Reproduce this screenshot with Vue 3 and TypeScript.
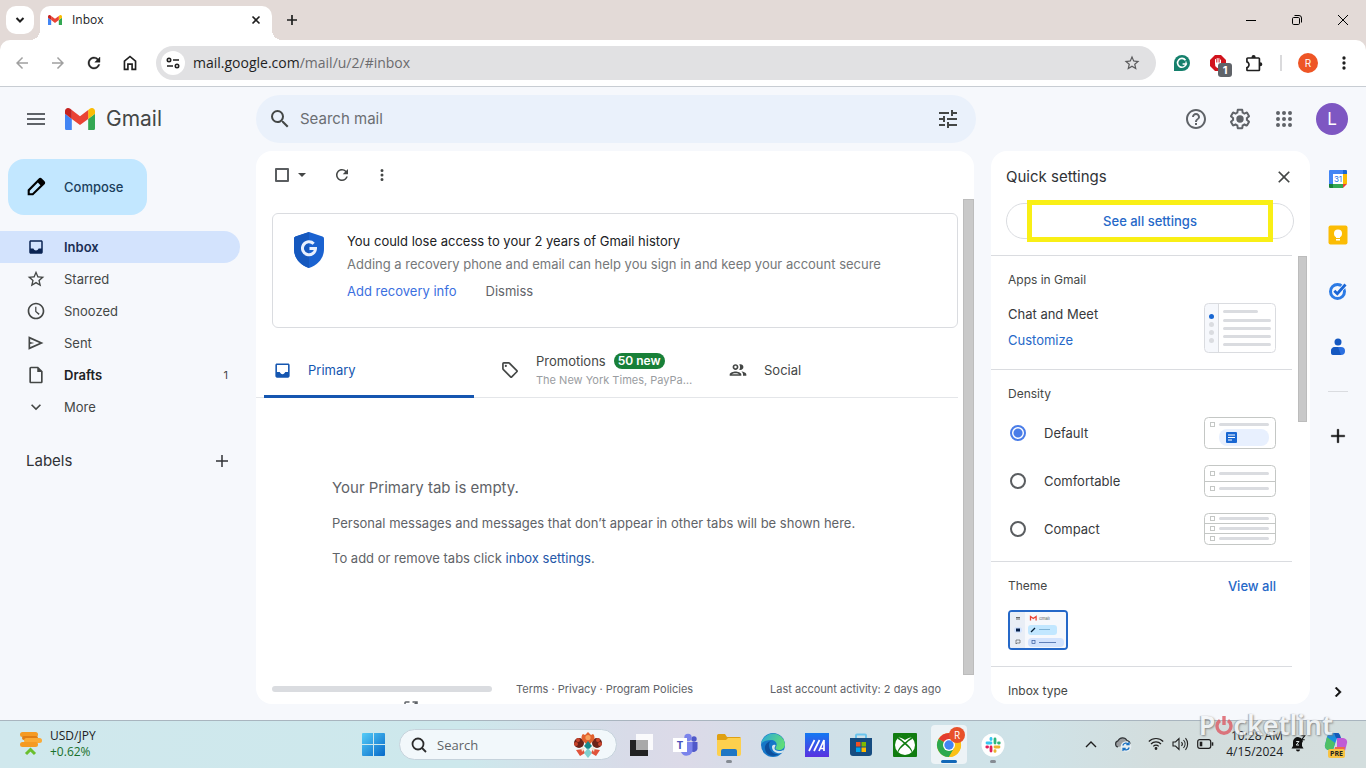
<script setup lang="ts">
import { h, ref } from 'vue'

const paths: Record<string, string> = {
  menu: 'M3 18h18v-2H3v2zm0-5h18v-2H3v2zm0-7v2h18V6H3z',
  search:
    'M15.5 14h-.79l-.28-.27A6.47 6.47 0 0 0 16 9.5 6.5 6.5 0 1 0 9.5 16c1.61 0 3.09-.59 4.23-1.57l.27.28v.79l5 4.99L20.49 19l-4.99-5zm-6 0C7.01 14 5 11.99 5 9.5S7.01 5 9.5 5 14 7.01 14 9.5 11.99 14 9.5 14z',
  tune: 'M3 17v2h6v-2H3zM3 5v2h10V5H3zm10 16v-2h8v-2h-8v-2h-2v6h2zM7 9v2H3v2h4v2h2V9H7zm14 4v-2H11v2h10zm-6-4h2V7h4V5h-4V3h-2v6z',
  help: 'M11 18h2v-2h-2v2zm1-16C6.48 2 2 6.48 2 12s4.48 10 10 10 10-4.48 10-10S17.52 2 12 2zm0 18c-4.41 0-8-3.59-8-8s3.59-8 8-8 8 3.59 8 8-3.59 8-8 8zm0-14c-2.21 0-4 1.79-4 4h2c0-1.1.9-2 2-2s2 .9 2 2c0 2-3 1.75-3 5h2c0-2.25 3-2.5 3-5 0-2.21-1.79-4-4-4z',
  settings:
    'M13.85 22.25h-3.7c-.74 0-1.36-.54-1.45-1.27l-.27-1.89c-.27-.14-.53-.29-.79-.46l-1.8.72c-.7.26-1.47-.03-1.81-.65L2.2 15.53c-.35-.66-.2-1.44.36-1.88l1.53-1.19c-.01-.15-.02-.3-.02-.46 0-.15.01-.31.02-.46l-1.52-1.19c-.59-.45-.74-1.26-.37-1.88l1.85-3.19c.34-.62 1.11-.9 1.79-.63l1.81.73c.26-.17.52-.32.78-.46l.27-1.91c.09-.7.71-1.25 1.44-1.25h3.7c.74 0 1.36.54 1.45 1.27l.27 1.89c.27.14.53.29.79.46l1.8-.72c.71-.26 1.48.03 1.82.65l1.84 3.18c.36.66.2 1.44-.36 1.88l-1.52 1.19c.01.15.02.3.02.46s-.01.31-.02.46l1.52 1.19c.56.45.72 1.23.37 1.86l-1.86 3.22c-.34.62-1.11.9-1.8.63l-1.8-.72c-.26.17-.52.32-.78.46l-.27 1.91c-.1.68-.72 1.22-1.46 1.22zm-3.23-2h2.76l.37-2.55.53-.22c.44-.18.88-.44 1.34-.78l.45-.34 2.38.96 1.38-2.4-2.03-1.58.07-.56c.03-.26.06-.51.06-.78s-.03-.53-.06-.78l-.07-.56 2.03-1.58-1.39-2.4-2.39.96-.45-.35c-.42-.32-.87-.58-1.33-.77l-.52-.22-.37-2.55h-2.76l-.37 2.55-.53.21c-.44.19-.88.44-1.34.79l-.45.33-2.38-.95-1.39 2.39 2.03 1.58-.07.56a7 7 0 0 0-.06.79c0 .26.02.53.06.78l.07.56-2.03 1.58 1.38 2.4 2.39-.96.45.35c.43.33.86.58 1.33.77l.53.22.38 2.55zM12 8.3a3.7 3.7 0 1 0 0 7.4 3.7 3.7 0 0 0 0-7.4z',
  apps: 'M6 8a2 2 0 1 0 0-4 2 2 0 0 0 0 4zm6 0a2 2 0 1 0 0-4 2 2 0 0 0 0 4zm6 0a2 2 0 1 0 0-4 2 2 0 0 0 0 4zM6 14a2 2 0 1 0 0-4 2 2 0 0 0 0 4zm6 0a2 2 0 1 0 0-4 2 2 0 0 0 0 4zm6 0a2 2 0 1 0 0-4 2 2 0 0 0 0 4zM6 20a2 2 0 1 0 0-4 2 2 0 0 0 0 4zm6 0a2 2 0 1 0 0-4 2 2 0 0 0 0 4zm6 0a2 2 0 1 0 0-4 2 2 0 0 0 0 4z',
  star: 'M22 9.24l-7.19-.62L12 2 9.19 8.63 2 9.24l5.46 4.73L5.82 21 12 17.27 18.18 21l-1.63-7.03L22 9.24zM12 15.4l-3.76 2.27 1-4.28-3.32-2.88 4.38-.38L12 6.1l1.71 4.04 4.38.38-3.32 2.88 1 4.28L12 15.4z',
  clock:
    'M11.99 2C6.47 2 2 6.48 2 12s4.47 10 9.99 10C17.52 22 22 17.52 22 12S17.52 2 11.99 2zM12 20c-4.42 0-8-3.58-8-8s3.58-8 8-8 8 3.58 8 8-3.58 8-8 8zm.5-13H11v6l4.2 3.7 1.2-1.3-3.9-3.2z',
  inbox:
    'M19 3H5c-1.1 0-2 .9-2 2v14c0 1.1.9 2 2 2h14c1.1 0 2-.9 2-2V5c0-1.1-.9-2-2-2zm0 11h-3.5c-.7 1.5-1.9 2.6-3.5 2.6S9.2 15.5 8.5 14H5V5h14v9z',
  sent: 'M3 4v16l18-8L3 4zm2 3.1L16 12 5 16.9v-3.6l5-1.3-5-1.3V7.1z',
  draft:
    'M14.5 2H6c-1.1 0-2 .9-2 2v16c0 1.1.9 2 2 2h12c1.1 0 2-.9 2-2V7.5L14.5 2zM6 20V4h7.5v4.5H18V20H6z',
  expand: 'M7.41 8.59L12 13.17l4.59-4.58L18 10l-6 6-6-6z',
  plus: 'M20 13h-7v7h-2v-7H4v-2h7V4h2v7h7v2z',
  refresh:
    'M17.65 6.35A7.958 7.958 0 0 0 12 4c-4.42 0-7.99 3.58-7.99 8s3.57 8 7.99 8c3.73 0 6.84-2.55 7.73-6h-2.08A5.99 5.99 0 0 1 12 18c-3.31 0-6-2.69-6-6s2.69-6 6-6c1.66 0 3.14.69 4.22 1.78L13 11h7V4l-2.35 2.35z',
  more: 'M12 8a2 2 0 1 0 0-4 2 2 0 0 0 0 4zm0 2a2 2 0 1 0 0 4 2 2 0 0 0 0-4zm0 6a2 2 0 1 0 0 4 2 2 0 0 0 0-4z',
  close:
    'M19 6.41 17.59 5 12 10.59 6.41 5 5 6.41 10.59 12 5 17.59 6.41 19 12 13.41 17.59 19 19 17.59 13.41 12z',
  people:
    'M9 13.75c-2.34 0-7 1.17-7 3.5V19h14v-1.75c0-2.33-4.66-3.5-7-3.5zM4.34 17c.84-.58 2.87-1.25 4.66-1.25s3.82.67 4.66 1.25H4.34zM9 12c1.93 0 3.5-1.57 3.5-3.5S10.93 5 9 5 5.5 6.57 5.5 8.5 7.07 12 9 12zm0-5c.83 0 1.5.67 1.5 1.5S9.83 10 9 10s-1.5-.67-1.5-1.5S8.17 7 9 7zm7.04 6.81c1.16.84 1.96 1.96 1.96 3.44V19h4v-1.75c0-2.02-3.5-3.17-5.96-3.44zM15 12c1.93 0 3.5-1.57 3.5-3.5S16.93 5 15 5c-.54 0-1.04.13-1.5.35.63.89 1 1.98 1 3.15s-.37 2.26-1 3.15c.46.22.96.35 1.5.35z',
  tag: 'M10.6 2.5H4.5a2 2 0 0 0-2 2v6.1c0 .5.2 1 .6 1.400l8.9 8.9a2 2 0 0 0 2.8 0l6.1-6.1a2 2 0 0 0 0-2.8L12 3.1a2 2 0 0 0-1.4-.6zM4.5 4.500h6l9 8.9-6.1 6.1-8.9-9v-6zM7 5.8a1.3 1.3 0 1 0 0 2.6 1.3 1.3 0 0 0 0-2.6z',
  pencil:
    'M20.4 3.2 19.2 2a3 3 0 0 0-4.2 0L2 15.4V22h6.6L22 9a3 3 0 0 0 0-4.2zM7.6 19.6H4.5v-3.1l9.7-9.8 3.1 3.1-9.7 9.8z',
  back: 'M20 11H7.83l5.59-5.59L12 4l-8 8 8 8 1.41-1.41L7.83 13H20v-2z',
  forward: 'M12 4l-1.41 1.41L16.17 11H4v2h12.17l-5.58 5.59L12 20l8-8z',
  home: 'M12 2 3.5 9v12.5h6.8v-7h3.4v7h6.8V9L12 2zm0 2.8L18.3 10v9.3h-2.4v-7H8.1v7H5.7V10L12 4.8z',
  puzzle:
    'M19.5 11V7c0-1.1-.9-2-2-2H14a2.5 2.5 0 0 0-5 0H4.5c-1.1 0-2 .9-2 2v4.3c1.5.3 2.5 1.3 2.5 2.7s-1 2.4-2.5 2.7V20c0 1.1.9 2 2 2h13c1.1 0 2-.9 2-2v-4a2.5 2.5 0 0 0 0-5zm-2 9h-13v-1.8c1.5-.8 2.5-2.4 2.5-4.2s-1-3.4-2.5-4.2V7h13v13z',
  chevron: 'M8.59 16.59 13.17 12 8.59 7.41 10 6l6 6-6 6z',
  openNew:
    'M5 5h5V3H5a2 2 0 0 0-2 2v14c0 1.1.9 2 2 2h14a2 2 0 0 0 2-2v-5h-2v5H5V5zm9-2v2h3.6l-9 9 1.4 1.4 9-9V10h2V3h-7z',
}

const Icon = (props: { name: string; size?: number }) =>
  h(
    'svg',
    { width: props.size ?? 20, height: props.size ?? 20, viewBox: '0 0 24 24', fill: 'currentColor', 'aria-hidden': 'true' },
    [h('path', { d: paths[props.name] })],
  )
Icon.props = ['name', 'size']

const GmailMark = (props: { width: number }) =>
  h('svg', { width: props.width, viewBox: '52 42 88 66', 'aria-hidden': 'true' }, [
    h('path', { fill: '#4285f4', d: 'M58 108h14V74L52 59v43c0 3.32 2.69 6 6 6' }),
    h('path', { fill: '#34a853', d: 'M120 108h14c3.32 0 6-2.69 6-6V59l-20 15' }),
    h('path', { fill: '#fbbc04', d: 'M120 48v26l20-15v-8c0-7.42-8.47-11.65-14.4-7.2' }),
    h('path', { fill: '#ea4335', d: 'M72 74V48l24 18 24-18v26L96 92' }),
    h('path', { fill: '#c5221f', d: 'M52 51v8l20 15V48l-5.6-4.2c-5.94-4.45-14.4-.22-14.4 7.2' }),
  ])
GmailMark.props = ['width']

interface Folder {
  icon: string
  label: string
  count?: number
  active?: boolean
}
const folders: Folder[] = [
  { icon: 'inbox', label: 'Inbox', active: true },
  { icon: 'star', label: 'Starred' },
  { icon: 'clock', label: 'Snoozed' },
  { icon: 'sent', label: 'Sent' },
  { icon: 'draft', label: 'Drafts', count: 1 },
  { icon: 'expand', label: 'More' },
]

const densities = ['Default', 'Comfortable', 'Compact']
const density = ref('Default')
const query = ref('')
const address = 'mail.google.com'
const addressPath = '/mail/u/2/#inbox'
</script>

<template>
  <div class="desktop">
    <header class="tabstrip">
      <button class="tab-search" aria-label="Search tabs">
        <svg width="12" height="12" viewBox="0 0 12 12"><path d="M2.5 4 6 7.500 9.5 4" fill="none" stroke="#1f1f1f" stroke-width="2" /></svg>
      </button>
      <div class="tab">
        <GmailMark :width="14" />
        <span class="tab-title">Inbox</span>
        <button class="plain" aria-label="Close tab">
          <svg width="10" height="10" viewBox="0 0 10 10"><path d="M1.5 1.5l7 7m0-7l-7 7" stroke="#1f1f1f" stroke-width="1.6" /></svg>
        </button>
      </div>
      <button class="plain new-tab" aria-label="New tab">
        <svg width="12" height="12" viewBox="0 0 12 12"><path d="M6 1v10M1 6h10" stroke="#1f1f1f" stroke-width="1.7" /></svg>
      </button>
      <div class="window-controls">
        <button class="plain" aria-label="Minimize"><svg width="10" height="10" viewBox="0 0 10 10"><path d="M0 5.500h10" stroke="#000" /></svg></button>
        <button class="plain" aria-label="Restore">
          <svg width="10" height="10" viewBox="0 0 10 10" fill="none" stroke="#000"><rect x=".5" y="2.5" width="7" height="7" rx="1.2" /><path d="M2.5.5H7A2.5 2.5 0 0 1 9.5 3v4.5" /></svg>
        </button>
        <button class="plain" aria-label="Close window"><svg width="10" height="10" viewBox="0 0 10 10"><path d="M0 0l10 10M10 0L0 10" stroke="#000" /></svg></button>
      </div>
    </header>

    <div class="toolbar-wrap">
      <div class="toolbar">
        <button class="tool dim" aria-label="Back"><Icon name="back" :size="18" /></button>
        <button class="tool dim" aria-label="Forward"><Icon name="forward" :size="18" /></button>
        <button class="tool" aria-label="Reload"><Icon name="refresh" :size="18" class="heavy" /></button>
        <button class="tool" aria-label="Home"><Icon name="home" :size="18" /></button>
        <div class="omnibox">
          <button class="site-info" aria-label="View site information">
            <svg width="14" height="12" viewBox="0 0 14 12" fill="none" stroke="#1f1f1f" stroke-width="1.6"><circle cx="3" cy="3" r="1.7" /><path d="M7 3h6M1 9h6" /><circle cx="11" cy="9" r="1.7" /></svg>
          </button>
          <a class="url" href="#inbox">{{ address }}<span>{{ addressPath }}</span></a>
          <button class="plain" aria-label="Bookmark this tab"><Icon name="star" :size="18" class="grey" /></button>
        </div>
        <button class="tool" aria-label="Grammarly">
          <svg width="16" height="16" viewBox="0 0 16 16"><path d="M8 0a8 8 0 1 1 0 16H0V8a8 8 0 0 1 8-8z" fill="#15806c" /><path d="M11.5 5.200A4.4 4.4 0 1 0 12.2 9H8.6" fill="none" stroke="#fff" stroke-width="1.6" /><path d="M12 6.500v3" stroke="#fff" stroke-width="1.2" /></svg>
        </button>
        <button class="tool" aria-label="Ad blocker">
          <svg width="16" height="16" viewBox="0 0 16 16"><path d="M5 0h6l5 5v6l-5 5H5l-5-5V5z" fill="#d1131c" /><path d="M5.5 8V4.500M7.200 8V3.500M8.900 8V3.500M10.500 8V5M5.500 8h5c0 3-.8 4.500-2.600 4.500S5.500 11 5.500 8z" fill="#fff" stroke="#fff" stroke-linecap="round" /></svg>
          <span class="badge">1</span>
        </button>
        <button class="tool" aria-label="Extensions"><Icon name="puzzle" :size="20" /></button>
        <span class="divider"></span>
        <button class="tool" aria-label="Profile"><span class="profile">R</span></button>
        <button class="tool" aria-label="Chrome menu"><Icon name="more" :size="20" /></button>
      </div>
    </div>

    <div class="gmail">
      <header class="gm-header">
        <div class="brand">
          <button class="plain menu" aria-label="Main menu"><Icon name="menu" :size="24" /></button>
          <GmailMark :width="30" />
          <span class="brand-name">Gmail</span>
        </div>
        <form class="search" @submit.prevent>
          <button class="plain" type="submit" aria-label="Search mail"><Icon name="search" :size="24" /></button>
          <input v-model="query" type="text" placeholder="Search mail" aria-label="Search mail" />
          <button class="plain" type="button" aria-label="Show search options"><Icon name="tune" :size="24" /></button>
        </form>
        <div class="gm-actions">
          <button class="plain" aria-label="Support"><Icon name="help" :size="24" /></button>
          <button class="plain" aria-label="Settings"><Icon name="settings" :size="24" /></button>
          <button class="plain" aria-label="Google apps"><Icon name="apps" :size="24" /></button>
          <button class="avatar" aria-label="Account">L</button>
        </div>
      </header>

      <div class="gm-body">
        <aside class="sidebar">
          <button class="compose"><Icon name="pencil" :size="20" /><span>Compose</span></button>
          <nav>
            <a v-for="f in folders" :key="f.label" href="#" :class="['folder', { active: f.active, bold: f.active || f.count }]">
              <Icon :name="f.icon" :size="f.icon === 'inbox' ? 18 : 20" />
              <span class="folder-name">{{ f.label }}</span>
              <span v-if="f.count" class="count">{{ f.count }}</span>
            </a>
          </nav>
          <div class="labels">
            <h2>Labels</h2>
            <button class="plain" aria-label="Create new label"><Icon name="plus" :size="18" /></button>
          </div>
        </aside>

        <main class="mail">
          <div class="mail-tools">
            <input type="checkbox" class="select-all" aria-label="Select all" />
            <button class="plain caret" aria-label="Select options"><svg width="8" height="4" viewBox="0 0 8 4"><path d="M0 0h8L4 4z" fill="#444746" /></svg></button>
            <button class="plain" aria-label="Refresh"><Icon name="refresh" :size="18" /></button>
            <button class="plain" aria-label="More"><Icon name="more" :size="18" /></button>
          </div>
          <div class="mail-scroll">
            <div class="mail-content">
              <section class="banner">
                <svg width="30" height="36" viewBox="0 0 30 36">
                  <path d="M15 0 1.500 4.500Q0 5 0 6.500V17c0 9 6 16 15 19 9-3 15-10 15-19V6.500Q30 5 28.500 4.500z" fill="#1a62d0" />
                  <path d="M15 0 1.500 4.500Q0 5 0 6.500V17c0 9 6 16 15 19z" fill="#1558be" />
                  <path d="M19.700 11.800A6.500 6.500 0 1 0 21.500 16.500H15.500" fill="none" stroke="#e8f0fe" stroke-width="3" />
                </svg>
                <div class="banner-text">
                  <h3>You could lose access to your 2 years of Gmail history</h3>
                  <p>Adding a recovery phone and email can help you sign in and keep your account secure</p>
                  <div class="banner-actions">
                    <a href="#">Add recovery info</a>
                    <button class="plain">Dismiss</button>
                  </div>
                </div>
              </section>

              <div class="tabs" role="tablist">
                <button class="mail-tab selected" role="tab" aria-selected="true"><Icon name="inbox" :size="19" /><span>Primary</span></button>
                <button class="mail-tab" role="tab" aria-selected="false">
                  <Icon name="tag" :size="20" />
                  <span class="promo">
                    <span class="promo-top">Promotions <b>50 new</b></span>
                    <small>The New York Times, PayPa…</small>
                  </span>
                </button>
                <button class="mail-tab" role="tab" aria-selected="false"><Icon name="people" :size="20" /><span>Social</span></button>
              </div>

              <section class="empty">
                <h3>Your Primary tab is empty.</h3>
                <p>Personal messages and messages that don’t appear in other tabs will be shown here.</p>
                <p>To add or remove tabs click <a href="#">inbox settings</a>.</p>
              </section>

              <footer class="mail-footer">
                <div class="quota"><span class="quota-bar"></span><Icon name="openNew" :size="18" /></div>
                <p><a href="#">Terms</a> · <a href="#">Privacy</a> · <a href="#">Program Policies</a></p>
                <p>Last account activity: 2 days ago</p>
              </footer>
            </div>
            <div class="scrollbar"></div>
          </div>
        </main>

        <aside class="settings">
          <div class="settings-top">
            <div class="settings-title">
              <h2>Quick settings</h2>
              <button class="plain" aria-label="Close"><Icon name="close" :size="20" /></button>
            </div>
            <div class="all-wrap">
              <button class="all-settings">See all settings</button>
              <span class="highlight"></span>
            </div>
          </div>
          <div class="settings-scroll">
            <div class="settings-content">
              <section class="apps">
                <h3>Apps in Gmail</h3>
                <div class="option">
                  <div class="chat"><span>Chat and Meet</span><a href="#">Customize</a></div>
                  <svg width="72" height="50" viewBox="0 0 72 50" fill="none">
                    <path d="M4.5.5H14v49H4.500a4 4 0 0 1-4-4v-41a4 4 0 0 1 4-4z" fill="#f6f8fc" />
                    <rect x=".5" y=".5" width="71" height="49" rx="4" stroke="#dadce0" /><path d="M14.5 0v50" stroke="#dadce0" />
                    <circle cx="7.5" cy="13.5" r="2.5" fill="#1967d2" />
                    <g fill="#dadce0"><circle cx="7.5" cy="21.5" r="2.5" /><circle cx="7.5" cy="29.5" r="2.5" /><circle cx="7.5" cy="37.5" r="2.5" /></g>
                    <path d="M20.5 8.500h32M20.5 17.500h45M20.5 25.500h45M20.5 33.500h45M20.5 41.500h45" stroke="#dadce0" stroke-width="3" stroke-linecap="round" />
                  </svg>
                </div>
              </section>
              <section class="density">
                <h3>Density</h3>
                <label v-for="d in densities" :key="d" class="option radio-row">
                  <input v-model="density" type="radio" name="density" :value="d" />
                  <span>{{ d }}</span>
                  <svg width="72" height="32" viewBox="0 0 72 32" fill="none" stroke="#c4c7c5">
                    <rect x=".5" y=".5" width="71" height="31" rx="4" />
                    <template v-if="d === 'Default'">
                      <rect x="6.5" y="5.5" width="4" height="4" /><path d="M16.5 7.500h47" stroke="#dadce0" stroke-width="3" stroke-linecap="round" />
                      <rect x="15" y="12" width="50" height="17" rx="8" fill="#e8f0fe" stroke="none" />
                      <rect x="22" y="15" width="11" height="11" rx="1" fill="#1967d2" stroke="none" /><path d="M24 18h7M24 20.500h7M24 23h4" stroke="#fff" stroke-width="1.2" />
                    </template>
                    <template v-else-if="d === 'Comfortable'">
                      <path d="M0 16.500h72" /><rect x="6.5" y="6.5" width="4" height="4" /><rect x="6.5" y="21.5" width="4" height="4" />
                      <path d="M16.5 8.500h47M16.5 23.500h47" stroke="#dadce0" stroke-width="3" stroke-linecap="round" />
                    </template>
                    <template v-else>
                      <path d="M0 10.500h72M0 20.500h72" /><rect x="6.5" y="3.5" width="4" height="4" /><rect x="6.5" y="13.5" width="4" height="4" /><rect x="6.5" y="23.5" width="4" height="4" />
                      <path d="M16.5 5.500h47M16.5 15.500h47M16.5 25.500h47" stroke="#dadce0" stroke-width="3" stroke-linecap="round" />
                    </template>
                  </svg>
                </label>
              </section>
              <section class="theme">
                <div class="theme-head"><h3>Theme</h3><a href="#">View all</a></div>
                <button class="theme-thumb" aria-label="Default theme">
                  <svg width="56" height="36" viewBox="0 0 56 36">
                    <rect width="56" height="36" fill="#f6f8fc" /><rect width="15" height="36" fill="#e9eef6" />
                    <path d="M6 5.500h4M6 7h4" stroke="#444" stroke-width=".8" />
                    <rect x="4" y="15" width="8" height="6" rx="3" fill="#d3e3fd" /><rect x="6" y="16.5" width="4" height="3" fill="#041e49" />
                    <path d="M6 28h4v3H7l-1 1z" fill="none" stroke="#444" stroke-width=".6" />
                    <path d="M20.5 8.500v-4l2.800 2 2.800-2v4" fill="none" stroke="#ea4335" stroke-width="1.3" />
                    <text x="29" y="8" font-size="4" fill="#555">Gmail</text>
                    <rect x="18" y="13" width="29" height="10" rx="3" fill="#c2e7ff" /><path d="M21 20l4-4" stroke="#001d35" stroke-width="1.3" /><path d="M29 17.500h11" stroke="#7fb2d5" />
                    <rect x="18" y="26" width="36" height="9" rx="4" fill="#d3e3fd" /><rect x="22" y="28.5" width="3" height="3" fill="none" stroke="#33579b" stroke-width=".7" /><path d="M29 30.500h17" stroke="#5f7fb8" />
                  </svg>
                </button>
              </section>
              <section class="inbox-type"><h3>Inbox type</h3></section>
            </div>
            <div class="scrollbar"></div>
          </div>
        </aside>

        <aside class="rail">
          <button class="plain" aria-label="Calendar">
            <svg width="20" height="20" viewBox="0 0 20 20">
              <path d="M2 1h13v4H5v10H1V2a1 1 0 0 1 1-1z" fill="#4285f4" /><path d="M15 1h3a1 1 0 0 1 1 1v3h-4z" fill="#1967d2" /><path d="M15 5h4v10h-4z" fill="#fbbc04" />
              <path d="M5 15h10v4H5z" fill="#34a853" /><path d="M1 15h4v4H2a1 1 0 0 1-1-1z" fill="#188038" /><path d="M15 15h4l-4 4z" fill="#ea4335" /><path d="M5 5h10v10H5z" fill="#fff" />
              <text x="10" y="13" text-anchor="middle" font-size="8" fill="#1a73e8">31</text>
            </svg>
          </button>
          <button class="plain" aria-label="Keep">
            <svg width="20" height="20" viewBox="0 0 20 20"><rect x=".5" y=".5" width="19" height="19" rx="2" fill="#fbbc04" /><circle cx="10" cy="8.5" r="4" fill="#fff" /><path d="M8 11h4v2H8zM8 14h4v1.500H8z" fill="#fff" /></svg>
          </button>
          <button class="plain" aria-label="Tasks">
            <svg width="20" height="20" viewBox="0 0 20 20" fill="none"><circle cx="9.5" cy="10.5" r="7" stroke="#2c7be5" stroke-width="3" /><path d="M12 9.500 18 3" stroke="#f6f8fc" stroke-width="4.5" /><path d="M6.3 9.800 9.300 12.800 17.500 3.500" stroke="#1a66d6" stroke-width="2.8" /></svg>
          </button>
          <button class="plain" aria-label="Contacts">
            <svg width="20" height="20" viewBox="0 0 20 20"><circle cx="10" cy="5" r="3.5" fill="#1558c0" /><rect x="3" y="10" width="14" height="8" rx="4" fill="#2a6fe0" /><path d="M3 16v-1.500A4.5 4.5 0 0 1 7.500 10H10l3 8H5a2 2 0 0 1-2-2z" fill="#1558c0" /></svg>
          </button>
          <span class="rail-divider"></span>
          <button class="plain dark" aria-label="Get add-ons"><Icon name="plus" :size="20" class="heavy" /></button>
          <button class="plain dark hide-panel" aria-label="Hide side panel"><Icon name="chevron" :size="20" class="heavy" /></button>
        </aside>
      </div>
    </div>

    <footer class="taskbar">
      <button class="widget">
        <svg width="24" height="26" viewBox="0 0 24 26">
          <g fill="#f59a23"><rect x="1" y="1" width="18" height="5" rx="2.5" /><rect x="3" y="5" width="16" height="4" rx="2" fill="#e07d14" /><rect x="5" y="7" width="18" height="5" rx="2.5" fill="#fbaa35" /><rect x="1" y="11" width="18" height="5" rx="2.5" /></g>
          <path d="M7 23l4.500-4.500L16 23" fill="none" stroke="#6abf2e" stroke-width="3" />
        </svg>
        <span class="widget-text"><span>USD/JPY</span><span class="up">+0.62%</span></span>
      </button>

      <div class="task-center">
        <button class="task" aria-label="Start">
          <svg width="23" height="23" viewBox="0 0 23 23">
            <defs><linearGradient id="win" x1="0" y1="0" x2="1" y2="1"><stop offset="0" stop-color="#55ccf7" /><stop offset="1" stop-color="#0669c9" /></linearGradient></defs>
            <path d="M1 0h10v11H0V1a1 1 0 0 1 1-1zM12 0h10a1 1 0 0 1 1 1v10H12zM0 12h11v11H1a1 1 0 0 1-1-1zM12 12h11v10a1 1 0 0 1-1 1H12z" fill="url(#win)" />
          </svg>
        </button>
        <label class="task-search">
          <svg width="16" height="16" viewBox="0 0 16 16" fill="none" stroke="#2b2b2b" stroke-width="1.8"><circle cx="7" cy="7" r="5.5" /><path d="M11 11l4 4" /></svg>
          <input type="text" placeholder="Search" aria-label="Search Windows" />
          <svg width="30" height="26" viewBox="0 0 30 26">
            <g fill="#6b2219"><circle cx="6" cy="11" r="5" /><circle cx="24" cy="11" r="5" /></g>
            <g fill="#c8442c"><circle cx="5" cy="8" r="2" /><circle cx="3" cy="12" r="2" /><circle cx="25" cy="8" r="2" /><circle cx="27" cy="12" r="2" /></g>
            <path d="M9 8c-1-2-.5-5 1-6l2 1 3-3 3 3 2-1c1.500 1 2 4 1 6l-4 4h-4z" fill="#e2622f" /><circle cx="15" cy="5.5" r="2.6" fill="#f6a05c" /><path d="M15 9l4 5-4 4-4-4z" fill="#16888a" />
            <path d="M3 18l7-1 2 4-5 3zM27 18l-7-1-2 4 5 3z" fill="#e0533a" /><path d="M15 16l4 5-4 5-4-5z" fill="#7fd0cf" /><path d="M8 15l4 1-3 4zM22 15l-4 1 3 4z" fill="#f1e3d0" />
          </svg>
        </label>
        <button class="task" aria-label="Task view">
          <svg width="24" height="24" viewBox="0 0 24 24"><path d="M1 7h18v16H1z" fill="#222" /><path d="M7 1h17v16H7z" fill="#fff" fill-opacity=".85" /><path d="M7 7h12v10H7z" fill="#a9a9a9" /></svg>
        </button>
        <button class="task" aria-label="Teams">
          <svg width="26" height="24" viewBox="0 0 26 24">
            <circle cx="22" cy="6" r="2.7" fill="#5059c9" /><circle cx="16" cy="4.5" r="3.7" fill="#7b83eb" /><path d="M19 9h6.500v7a4 4 0 0 1-6.500 2z" fill="#5059c9" /><path d="M9 9h11.500v8a6 6 0 0 1-11.500 2z" fill="#7b83eb" />
            <rect x="1" y="5" width="14" height="14" fill="#fff" /><text x="8" y="16" text-anchor="middle" font-size="11" font-weight="700" fill="#4b53bc">T</text>
          </svg>
        </button>
        <button class="task open" aria-label="File Explorer">
          <svg width="26" height="24" viewBox="0 0 26 24"><path d="M1 2.500A1.5 1.5 0 0 1 2.500 1H9l2 3h12.500A1.5 1.5 0 0 1 25 5.500V12H1z" fill="#e0a012" /><path d="M1 7h9l2-2h13v16a2 2 0 0 1-2 2H3a2 2 0 0 1-2-2z" fill="#fdd04e" /><path d="M5 23v-5a2 2 0 0 1 2-2h12a2 2 0 0 1 2 2v5z" fill="#1f76c4" /></svg>
        </button>
        <button class="task" aria-label="Edge">
          <svg width="24" height="24" viewBox="0 0 24 24">
            <defs><linearGradient id="edge" x1="0" y1="0" x2="1" y2=".4"><stop offset="0" stop-color="#2aa5e0" /><stop offset="1" stop-color="#5fdc7a" /></linearGradient></defs>
            <circle cx="12" cy="12" r="12" fill="#1677c8" /><path d="M.2 11A12 12 0 0 1 24 11c0 4-3 6-6 6-3.500 0-4-1.500-3-3 2-4-1-7-5-7C5 7 1 9 .2 11z" fill="url(#edge)" />
            <path d="M8 12c0 6 5 10 10 9-5 3.500-13 2-14-5-.6-4 2-7 6-8-1.400 1-2 2.400-2 4z" fill="#0d4f9c" /><path d="M14.5 12c0 1.500-1 2-1 3.300 0 1.700 2 2.700 4.500 2.700 2 0 3.500-.6 5-1.600l-1 3.200c-5 2-11-.6-11-5.600 0-1.500 1-3 3.500-2z" fill="#d6e6ec" />
          </svg>
        </button>
        <button class="task" aria-label="MyASUS">
          <svg width="24" height="24" viewBox="0 0 24 24"><defs><linearGradient id="asus" x1="0" y1="0" x2="0" y2="1"><stop offset="0" stop-color="#1479f2" /><stop offset="1" stop-color="#5931e0" /></linearGradient></defs><rect width="24" height="24" fill="url(#asus)" /><path d="M4 18 9.500 7M9 18 14.500 7M14 18 19 7v11M15.500 15.500H19" fill="none" stroke="#fff" stroke-width="1.7" /></svg>
        </button>
        <button class="task" aria-label="Microsoft Store">
          <svg width="24" height="24" viewBox="0 0 24 24"><path d="M7 6V2.500A1 1 0 0 1 8 1.500h8a1 1 0 0 1 1 1V6" fill="none" stroke="#6cc5ee" stroke-width="2" /><path d="M1 5h22v15a3 3 0 0 1-3 3H4a3 3 0 0 1-3-3z" fill="#164c80" /><path d="M7 9h4.500v4.500H7z" fill="#f25022" /><path d="M12.500 9H17v4.500h-4.500z" fill="#7fba00" /><path d="M7 14.500h4.500V19H7z" fill="#00a4ef" /><path d="M12.500 14.500H17V19h-4.500z" fill="#ffb900" /></svg>
        </button>
        <button class="task" aria-label="Xbox">
          <svg width="24" height="24" viewBox="0 0 24 24"><rect width="24" height="24" rx="1" fill="#107c10" /><circle cx="12" cy="12" r="10" fill="#fff" /><path d="M5 4.500C8 4.200 10.500 6 12 7c1.500-1 4-2.800 7-2.500C16 2 14 1.500 12 1.500S8 2 5 4.500z" fill="#107c10" /><path d="M12 9.200c5 4 8.200 8.300 7.200 11.300-.7-3.200-3.600-6.200-7.200-9-3.600 2.800-6.500 5.800-7.200 9-1-3 2.200-7.300 7.200-11.300z" fill="#107c10" /><path d="M12 10.500C9.500 8 7 6 4.800 5M12 10.500C14.500 8 17 6 19.200 5" fill="none" stroke="#107c10" stroke-width="1.6" /></svg>
        </button>
        <button class="task current" aria-label="Chrome">
          <svg width="26" height="26" viewBox="0 0 26 26">
            <circle cx="13" cy="13" r="12" fill="#fbc116" /><path d="M13 13 2.600 7A12 12 0 0 1 23.400 7z" fill="#e33b2e" /><path d="M13 13 2.600 7A12 12 0 0 0 13 25l5.200-9z" fill="#2da94f" /><path d="M13 7h10.400A12 12 0 0 1 13 25l5.200-9z" fill="#fbc116" />
            <circle cx="13" cy="13" r="6" fill="#fff" /><circle cx="13" cy="13" r="4.7" fill="#4285f4" />
          </svg>
          <span class="chrome-badge">R</span>
        </button>
        <button class="task open" aria-label="Slack">
          <svg width="24" height="24" viewBox="0 0 24 24"><circle cx="12" cy="12" r="11.5" fill="#fff" /><g stroke-width="2.8" stroke-linecap="round"><path d="M6 10h4" stroke="#36c5f0" /><path d="M10 5.500v1" stroke="#36c5f0" /><path d="M14 6v4" stroke="#2eb67d" /><path d="M17.500 10h.8" stroke="#2eb67d" /><path d="M14 14h4" stroke="#ecb22e" /><path d="M14 17.600v.8" stroke="#ecb22e" /><path d="M10 14v4" stroke="#e01e5a" /><path d="M5.800 14h.8" stroke="#e01e5a" /></g></svg>
        </button>
      </div>

      <div class="tray">
        <button class="plain" aria-label="Show hidden icons"><svg width="12" height="8" viewBox="0 0 12 8"><path d="M1 7l5-5 5 5" fill="none" stroke="#1f1f1f" stroke-width="1.4" /></svg></button>
        <button class="plain" aria-label="OneDrive">
          <svg width="18" height="16" viewBox="0 0 18 16"><path d="M4 11a3.200 3.200 0 0 1 0-6.200A5 5 0 0 1 13 4.500a3.500 3.500 0 0 1 3 4" fill="#9a9da0" stroke="#33373a" stroke-width="1.2" /><circle cx="12" cy="10.500" r="5.300" fill="#e6eef2" /><path d="M8.800 9.500a3.400 3.400 0 0 1 6-1M15.200 11.500a3.400 3.400 0 0 1-6 1M15 6v2.700h-2.700M9 15v-2.700h2.700" fill="none" stroke="#176fc1" stroke-width="1.300" /></svg>
        </button>
        <button class="plain network" aria-label="Network, volume and battery">
          <svg width="16" height="13" viewBox="0 0 16 13" fill="none" stroke="#1f1f1f" stroke-width="1.2"><path d="M.8 4.500a10.200 10.200 0 0 1 14.400 0M3 7a7 7 0 0 1 10 0M5.300 9.300a3.800 3.800 0 0 1 5.400 0" /><circle cx="8" cy="11.500" r=".8" fill="#1f1f1f" /></svg>
          <svg width="17" height="14" viewBox="0 0 17 14" fill="none" stroke="#1f1f1f" stroke-width="1.1"><path d="M1 5h2.500L7 1.500v11L3.500 9H1zM9.500 5a3 3 0 0 1 0 4M11.500 3a6 6 0 0 1 0 8M13.500 1.200a9 9 0 0 1 0 11.600" /></svg>
          <svg width="17" height="10" viewBox="0 0 17 10" fill="none" stroke="#1f1f1f" stroke-width="1.2"><rect x=".7" y=".7" width="13" height="8.600" rx="2" /><path d="M15.500 3.300v3.400" stroke-width="1.6" /><path d="M2.700 2.700h2.600v4.600H2.700z" fill="#1f1f1f" stroke="none" /></svg>
        </button>
        <button class="clock"><span>10:28 AM</span><span>4/15/2024</span></button>
        <button class="plain" aria-label="Notifications">
          <svg width="15" height="17" viewBox="0 0 15 17"><path d="M7 2a5 5 0 0 0-5 5v4L.5 13.500h12L11 11V8l1-2-2-3z" fill="#111" /><path d="M5 14.500a2 2 0 0 0 4 0z" fill="#111" /><path d="M10.500.8h3.200l-3.200 4h3.200" fill="none" stroke="#111" stroke-width="1.1" /><path d="M5.200 6.500H8L5.200 10H8" fill="none" stroke="#dfe8e9" /></svg>
        </button>
        <button class="plain copilot" aria-label="Copilot">
          <svg width="24" height="24" viewBox="0 0 24 24">
            <path d="M7 1h8l-3 8-3 9H5a4 4 0 0 1-4-5l2-8a5 5 0 0 1 4-4z" fill="#1c8ee0" /><path d="M3 5l-2 8a4 4 0 0 0 4 5h4l2-7z" fill="#4fbf66" /><path d="M13 1a3 3 0 0 1 3 2l1 3h-5L10 1z" fill="#1557b8" />
            <path d="M13 6h6a4 4 0 0 1 4 5l-2 8a5 5 0 0 1-5 4H9l4-8z" fill="#c05bd6" /><path d="M11 15h10l-1 4a5 5 0 0 1-4 4H9z" fill="#f0684a" />
          </svg>
          <span class="pre">PRE</span>
        </button>
      </div>
      <div class="watermark" aria-hidden="true">
        <span>P</span>
        <svg width="18" height="20" viewBox="0 0 18 20" fill="none" stroke="#dc5a64" stroke-width="3.4"><path d="M5 5.500a7 7 0 1 0 8 0M9 1v9" /></svg>
        <span>cketlint</span>
      </div>
    </footer>
  </div>
</template>

<style>
body {
  background: #f6f8fc;
}
</style>

<style scoped>
.desktop {
  display: flex;
  flex-direction: column;
  height: 100vh;
  min-width: 1200px;
  overflow: hidden;
  font-family: Inter, Roboto, sans-serif;
  font-size: 13px;
  line-height: 20px;
  color: #202124;
}
.desktop *,
.desktop *::before,
.desktop *::after {
  box-sizing: border-box;
}
button,
input {
  font: inherit;
  color: inherit;
}
button {
  display: flex;
  align-items: center;
  justify-content: center;
  padding: 0;
  border: 0;
  cursor: pointer;
}
.plain {
  background: none;
}
svg {
  display: block;
  flex: none;
}
a {
  text-decoration: none;
  color: inherit;
}
h2,
h3,
p {
  margin: 0;
  font-size: inherit;
  font-weight: 400;
}
input[type='text'] {
  flex: 1;
  min-width: 0;
  padding: 0;
  border: 0;
  outline: 0;
  background: none;
}

/* Browser frame */
.tabstrip {
  display: flex;
  align-items: flex-end;
  height: 40px;
  flex: none;
  padding-left: 6px;
  background: #e3dad7;
  font-family: "Open Sans", "Noto Sans", sans-serif;
}
.tab-search {
  width: 28px;
  height: 28px;
  margin-bottom: 6px;
  border-radius: 10px;
  background: #fff;
}
.tab {
  position: relative;
  display: flex;
  align-items: center;
  width: 232px;
  height: 34px;
  margin-left: 6px;
  padding: 0 8px 6px;
  border-radius: 10px 10px 0 0;
  background: #fff;
  font-size: 12px;
}
.tab::before,
.tab::after {
  content: '';
  position: absolute;
  bottom: 0;
  width: 10px;
  height: 10px;
}
.tab::before {
  left: -10px;
  background: radial-gradient(circle at 0 0, transparent 10px, #fff 10px);
}
.tab::after {
  right: -10px;
  background: radial-gradient(circle at 100% 0, transparent 10px, #fff 10px);
}
.tab-title {
  flex: 1;
  margin-left: 10px;
}
.tab .plain {
  width: 16px;
  height: 28px;
}
.new-tab {
  width: 40px;
  height: 40px;
}
.window-controls {
  display: flex;
  margin-left: auto;
}
.window-controls button {
  width: 46px;
  height: 40px;
}
.toolbar-wrap {
  flex: none;
  background: #e3dad7;
}
.toolbar {
  display: flex;
  align-items: center;
  height: 47px;
  padding: 0 4px;
  border-bottom: 1px solid #c8cdd3;
  border-radius: 10px 10px 0 0;
  background: #fff;
}
.tool {
  position: relative;
  width: 36px;
  height: 36px;
  background: none;
  color: #1f1f1f;
}
.dim {
  color: #a0a0a0;
}
.heavy {
  stroke: currentColor;
  stroke-width: 0.5;
}
.omnibox {
  display: flex;
  align-items: center;
  flex: 1;
  height: 34px;
  margin: 0 8px;
  padding: 0 15px 0 5px;
  border-radius: 17px;
  background: #e1e1e3;
  font-family: "Open Sans", "Noto Sans", sans-serif;
  font-size: 14px;
}
.site-info {
  width: 24px;
  height: 24px;
  border-radius: 12px;
  background: #fff;
}
.url {
  flex: 1;
  margin-left: 8px;
  color: #1f1f1f;
}
.url span {
  color: #6b6b6e;
}
.grey {
  color: #5a5a5c;
}
.badge {
  position: absolute;
  left: 18px;
  top: 18px;
  width: 14px;
  height: 14px;
  border-radius: 3px;
  background: #5f6368;
  color: #fff;
  font-size: 11px;
  font-weight: 700;
  line-height: 14px;
}
.divider {
  width: 2px;
  height: 16px;
  margin: 0 8px;
  background: #dadadc;
}
.profile {
  width: 20px;
  height: 20px;
  border-radius: 10px;
  background: #ee5525;
  color: #fff;
  font-size: 10px;
}

/* Gmail */
.gmail {
  display: flex;
  flex-direction: column;
  flex: 1;
  min-height: 0;
  background: #f6f8fc;
}
.gm-header {
  display: flex;
  align-items: center;
  flex: none;
  height: 64px;
  padding-right: 18px;
  color: #5f6368;
}
.brand {
  display: flex;
  align-items: center;
  width: 256px;
  padding-left: 16px;
}
.menu {
  width: 40px;
  height: 40px;
  margin-right: 9px;
}
.brand-name {
  margin-left: 11px;
  font-size: 21px;
  line-height: 28px;
  color: #444746;
}
.search {
  display: flex;
  align-items: center;
  flex: 0 1 720px;
  height: 48px;
  padding: 0 8px 0 4px;
  border-radius: 24px;
  background: #eaf1fb;
  color: #444746;
  font-size: 15px;
}
.search .plain {
  width: 40px;
  height: 40px;
}
.search input::placeholder {
  color: #6b6e72;
  opacity: 1;
}
.gm-actions {
  display: flex;
  align-items: center;
  margin-left: auto;
}
.gm-actions .plain {
  width: 44px;
  height: 44px;
}
.avatar {
  width: 32px;
  height: 32px;
  margin-left: 10px;
  border-radius: 16px;
  background: #7e57c2;
  color: #fff;
  font-size: 17px;
}
.gm-body {
  display: flex;
  flex: 1;
  min-height: 0;
  padding-bottom: 16px;
}
.sidebar {
  flex: none;
  width: 256px;
  padding-top: 8px;
}
.compose {
  justify-content: flex-start;
  gap: 18px;
  height: 56px;
  margin: 0 0 16px 8px;
  padding: 0 24px 0 18px;
  border-radius: 16px;
  background: #c2e7ff;
  font-weight: 500;
  color: #1c3f5c;
}
.compose svg {
  color: #000;
}
.folder {
  display: flex;
  align-items: center;
  height: 32px;
  margin-right: 16px;
  padding: 0 12px 0 26px;
  border-radius: 0 16px 16px 0;
  color: #444746;
}
.folder svg {
  width: 20px;
}
.folder-name {
  flex: 1;
  margin-left: 18px;
}
.bold .folder-name {
  font-weight: 600;
  color: #202124;
}
.folder.active {
  background: #d3e3fd;
  color: #0b2453;
}
.folder.active .folder-name {
  color: #1c2f55;
}
.count {
  font-size: 11px;
}
.labels {
  display: flex;
  align-items: center;
  justify-content: space-between;
  height: 44px;
  margin-top: 16px;
  padding: 0 25px 0 26px;
  font-size: 15px;
  color: #303236;
}

.mail,
.settings {
  display: flex;
  flex-direction: column;
  overflow: hidden;
  border-radius: 16px;
  background: #fff;
}
.mail {
  flex: 1;
  min-width: 0;
  margin-right: 17px;
}
.mail-tools {
  display: flex;
  align-items: center;
  flex: none;
  height: 48px;
  padding-left: 19px;
  color: #444746;
}
.mail-tools .plain {
  width: 40px;
  height: 40px;
}
.mail-tools .caret {
  width: 26px;
  margin-right: 7px;
}
.select-all {
  appearance: none;
  width: 14px;
  height: 14px;
  margin: 0;
  border: 2px solid #5a5d60;
  border-radius: 1px;
}
.mail-scroll,
.settings-scroll {
  display: flex;
  flex: 1;
  min-height: 0;
}
.scrollbar {
  flex: none;
  border: 1px solid #bcbcbc;
  background: #c9c9c9;
}
.mail-scroll .scrollbar {
  width: 11px;
  margin-bottom: 29px;
}
.mail-content {
  display: flex;
  flex-direction: column;
  flex: 1;
  min-width: 0;
  padding: 14px 5px 0 0;
}
.banner {
  display: flex;
  gap: 23px;
  flex: none;
  height: 115px;
  margin: 0 0 15px 16px;
  padding: 18px 21px;
  border: 1px solid #dadce0;
  border-radius: 6px;
}
.banner-text {
  margin-top: -1px;
}
.banner-text p {
  margin-top: 3px;
  color: #757779;
}
.banner-actions {
  display: flex;
  gap: 29px;
  margin-top: 7px;
  color: #5f6368;
}
.banner-actions a {
  color: #3b6fe0;
}
.tabs {
  display: flex;
  flex: none;
  height: 55px;
  padding-left: 8px;
  border-bottom: 1px solid #e4e6e9;
}
.mail-tab {
  justify-content: flex-start;
  gap: 16px;
  width: 210px;
  height: 55px;
  margin-right: 18px;
  padding: 0 0 1px 8px;
  background: none;
  color: #444746;
}
.selected {
  padding: 2px 0 0 9px;
  border-bottom: 3px solid #1556b0;
  border-radius: 2px 2px 0 0;
  color: #1556b0;
}
.promo {
  display: flex;
  flex-direction: column;
  align-items: flex-start;
  white-space: nowrap;
}
.promo-top {
  display: flex;
  align-items: center;
  gap: 8px;
}
.promo b {
  padding: 0 4px;
  border-radius: 8px;
  background: #188038;
  color: #fff;
  font-size: 12px;
  font-weight: 600;
  line-height: 16px;
}
.promo small {
  font-size: 11px;
  line-height: 18px;
  color: #9a9da1;
}
.empty {
  margin: 80px 0 auto 76px;
  color: #5f6368;
}
.empty h3 {
  margin-bottom: 15px;
  font-size: 15px;
}
.empty p {
  margin-bottom: 15px;
}
.empty a {
  color: #2457a8;
}
.mail-footer {
  display: grid;
  grid-template-columns: 220px 1fr auto;
  column-gap: 24px;
  flex: none;
  height: 26px;
  padding: 0 17px 0 16px;
  font-size: 11px;
  line-height: 22px;
  color: #5f6368;
}
.quota {
  display: flex;
  flex-direction: column;
  padding: 8px 0 0 130px;
}
.quota-bar {
  flex: none;
  height: 6px;
  margin: 0 0 7px -130px;
  border-radius: 3px;
  background: #dadce0;
}

/* Quick settings */
.settings {
  flex: none;
  width: 319px;
}
.settings-top {
  flex: none;
  padding: 6px 16px 16px 15px;
  border-bottom: 1px solid #dadce0;
  margin-right: 18px;
}
.settings-title {
  display: flex;
  align-items: center;
  justify-content: space-between;
  height: 40px;
  margin-right: -18px;
  padding-right: 18px;
  font-size: 15px;
  color: #303236;
}
.settings-title .plain {
  width: 20px;
  margin-right: -18px;
  color: #444746;
}
.all-wrap {
  position: relative;
  margin: 6px -18px 0 0;
}
.all-settings {
  width: 100%;
  height: 36px;
  border: 1px solid #dadce0;
  border-radius: 18px;
  background: #fff;
  color: #2568c8;
  font-weight: 500;
}
.highlight {
  position: absolute;
  inset: -3px 21px;
  border: 5px solid #f9ef16;
}
.settings-scroll .scrollbar {
  width: 9px;
  height: 166px;
  margin: 0 3px 0 6px;
}
.settings-content {
  flex: 1;
  min-width: 0;
}
.settings-content section {
  padding: 14px 16px 0 17px;
  border-bottom: 1px solid #dadce0;
}
.settings h3 {
  font-size: 12px;
  color: #444746;
}
.settings a {
  color: #2568c8;
}
.settings-content .apps {
  height: 114px;
}
.option {
  display: flex;
  align-items: center;
  justify-content: space-between;
}
.apps .option {
  margin-top: 13px;
}
.chat {
  display: flex;
  flex-direction: column;
  gap: 6px;
  padding-bottom: 2px;
  color: #37393c;
}
.settings-content .density {
  height: 192px;
}
.density h3 {
  margin-bottom: 5px;
}
.radio-row {
  height: 48px;
  color: #37393c;
}
.radio-row span {
  flex: 1;
  margin-left: 16px;
}
.radio-row input {
  appearance: none;
  width: 16px;
  height: 16px;
  margin: 0 2px;
  border: 2px solid #5a5d60;
  border-radius: 8px;
}
.radio-row input:checked {
  border-color: #4a7de8;
  background: radial-gradient(circle, #4a7de8 4px, #fff 5px);
}
.settings-content .theme {
  height: 105px;
}
.theme-head {
  display: flex;
  justify-content: space-between;
  font-weight: 500;
}
.theme-thumb {
  width: 60px;
  height: 40px;
  margin-top: 14px;
  border: 2px solid #2568c8;
  border-radius: 4px;
  overflow: hidden;
  background: #f6f8fc;
}
.settings-content .inbox-type {
  border: 0;
}

.rail {
  display: flex;
  flex-direction: column;
  align-items: center;
  flex: none;
  width: 56px;
}
.rail .plain {
  width: 56px;
  height: 56px;
}
.rail-divider {
  width: 20px;
  height: 1px;
  margin: 16px 0;
  background: #dadce0;
}
.dark {
  color: #111;
}
.rail .hide-panel {
  height: 24px;
  margin-top: auto;
}

/* Windows taskbar */
.taskbar {
  position: relative;
  display: grid;
  grid-template-columns: 1fr auto 1fr;
  align-items: center;
  flex: none;
  height: 48px;
  border-top: 1px solid #a9b5bf;
  background: linear-gradient(90deg, #d0e8ed 0%, #cde8ec 34%, #d8dbe8 46%, #dcdae8 50%, #cfe0e8 60%, #cfe3e8 75%, #d3dddd 85%, #d3dede 100%);
  font-family: "Open Sans", "Noto Sans", sans-serif;
  font-size: 12px;
  line-height: 16px;
}
.widget {
  justify-self: start;
  gap: 7px;
  padding: 0 0 2px 19px;
  background: none;
}
.widget-text {
  display: flex;
  flex-direction: column;
  align-items: flex-start;
}
.up {
  color: #18702a;
}
.task-center {
  display: flex;
  align-items: center;
}
.task {
  position: relative;
  width: 44px;
  height: 47px;
  background: none;
}
.task-search {
  display: flex;
  align-items: center;
  gap: 10px;
  width: 218px;
  height: 31px;
  margin: 0 2px 0 4px;
  padding: 0 13px 0 11px;
  border: 1px solid #c6d3dc;
  border-radius: 16px;
  background: #f2f8fb;
}
.task-search input {
  font-size: 13px;
}
.task-search input::placeholder {
  color: #5f6468;
  opacity: 1;
}
.task.open::after,
.task.current::after {
  content: '';
  position: absolute;
  bottom: 5px;
  width: 6px;
  height: 3px;
  border-radius: 2px;
  background: #858b93;
}
.task.current::after {
  width: 16px;
  background: #1268b8;
}
.current::before {
  content: '';
  position: absolute;
  inset: 4px;
  border-radius: 4px;
  background: #edf3f6;
}
.current svg {
  position: relative;
}
.chrome-badge {
  position: absolute;
  left: 22px;
  top: 6px;
  width: 16px;
  height: 16px;
  border-radius: 8px;
  background: #e8512a;
  color: #fff;
  font-size: 10px;
}
.tray {
  display: flex;
  align-items: center;
  justify-self: end;
  padding: 0 18px 2px 0;
}
.tray > .plain {
  height: 40px;
}
.tray > .plain:first-child {
  margin-right: 17px;
}
.network {
  gap: 8px;
  margin: 0 12px 0 16px;
}
.clock {
  flex-direction: column;
  align-items: flex-end;
  margin-right: 8px;
  background: none;
}
.copilot {
  position: relative;
  margin-left: 18px;
}
.pre {
  position: absolute;
  left: 4px;
  bottom: 6px;
  padding: 0 2px;
  border-radius: 2px;
  background: #f8c344;
  font-size: 7px;
  font-weight: 700;
  line-height: 9px;
  color: #222;
}
.watermark {
  position: absolute;
  right: 33px;
  bottom: 27px;
  display: flex;
  align-items: center;
  font-family: "Noto Sans", sans-serif;
  font-size: 27px;
  font-weight: 600;
  line-height: 32px;
  color: #f4f6f8;
  text-shadow: 1px 1px 2px #777, -1px 0 1px #999;
  opacity: 0.8;
  pointer-events: none;
}
</style>
